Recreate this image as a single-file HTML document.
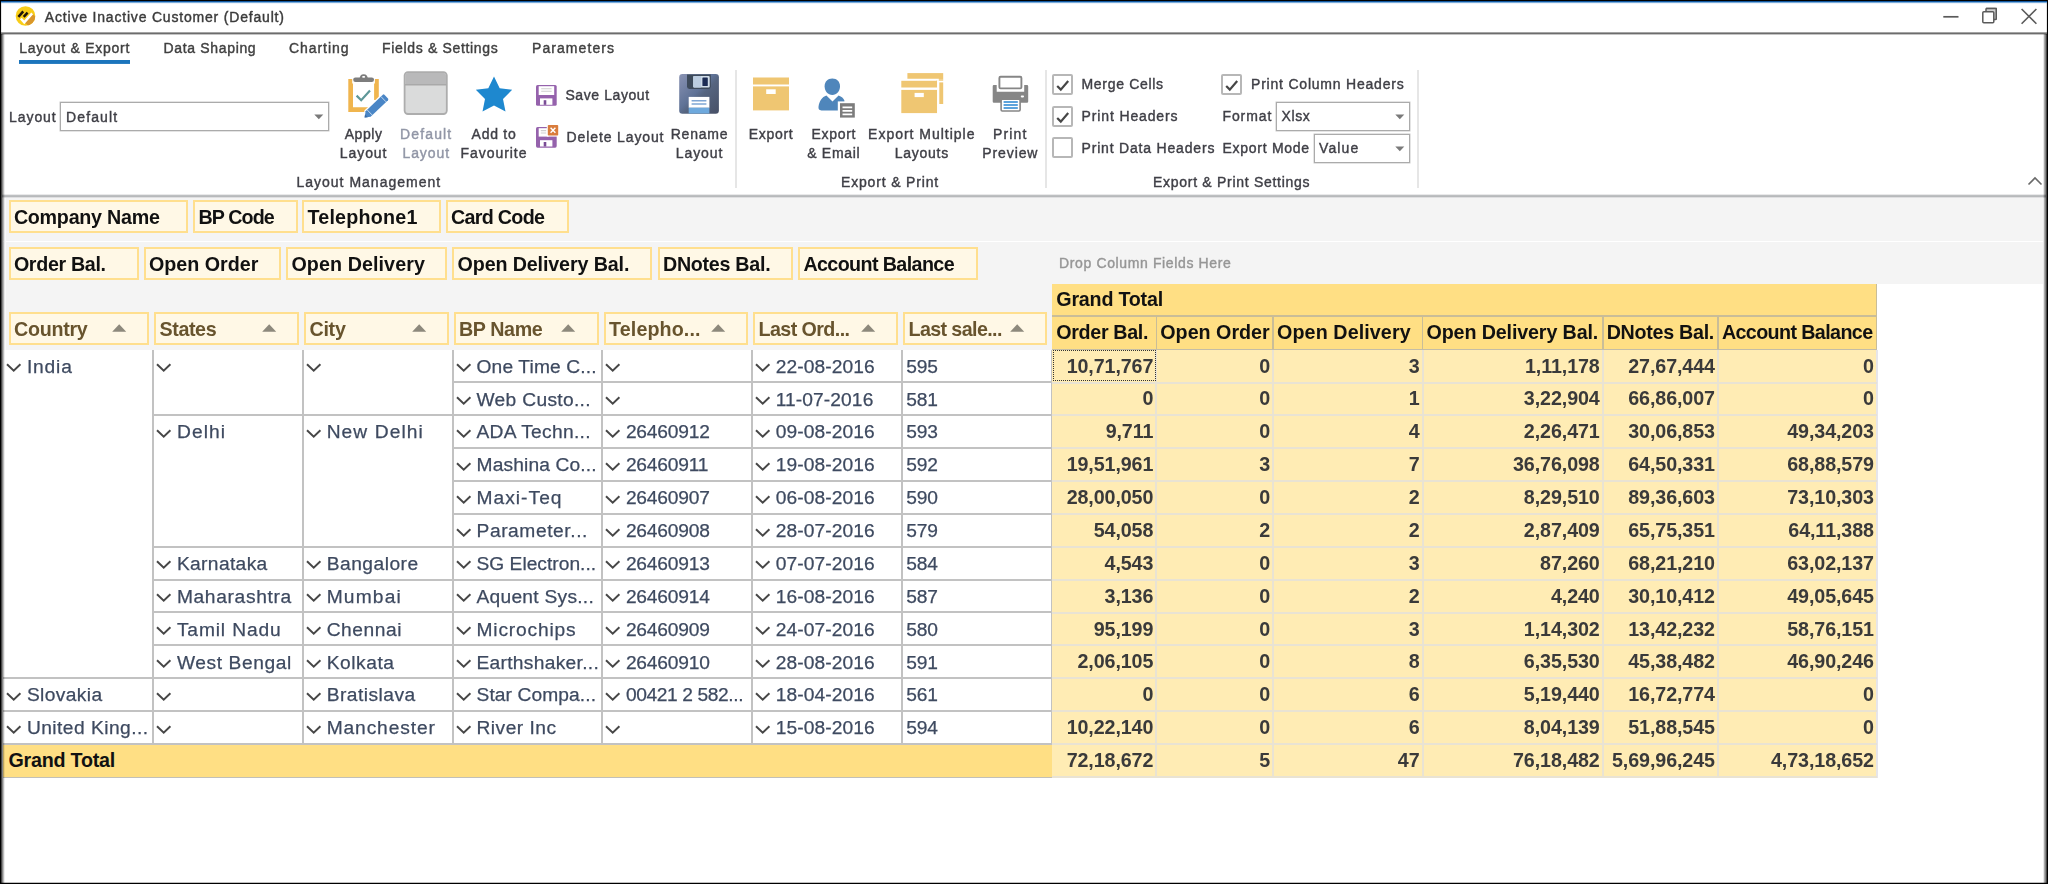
<!DOCTYPE html>
<html><head><meta charset="utf-8"><title>Active Inactive Customer (Default)</title>
<style>
html,body{margin:0;padding:0;background:#fff;}
body{width:2048px;height:884px;position:relative;overflow:hidden;font-family:"Liberation Sans",sans-serif;}
.a{position:absolute;box-sizing:border-box;}
.t{position:absolute;white-space:pre;}
.s{-webkit-text-stroke:0.4px currentColor;}
svg{position:absolute;overflow:visible;}
.fb{position:absolute;box-sizing:border-box;border:2px solid #ffdf8e;background:#fff8e6;height:33px;}
.hl{position:absolute;background:#b9b9b9;}
</style></head><body>

<div class="a" style="left:0px;top:0px;width:2048px;height:1px;background:#000;"></div>
<div class="a" style="left:0px;top:1px;width:2048px;height:1px;background:#10569f;"></div>
<div class="a" style="left:0px;top:2px;width:2048px;height:1px;background:#79acdb;"></div>
<div class="a" style="left:0px;top:3px;width:2048px;height:1px;background:#edf3fa;"></div>
<div class="a" id="content" style="left:0;top:0;width:2048px;height:884px;filter:blur(0.4px);">
<div class="a" style="left:1px;top:32px;width:2046px;height:1px;background:#a4a4a4;"></div>
<div class="a" style="left:1px;top:33px;width:2046px;height:1px;background:#6c6c6c;"></div>
<div class="a" style="left:1px;top:34px;width:2046px;height:1px;background:#c4c4c4;"></div>
<svg style="left:15px;top:6px" width="21" height="21" viewBox="0 0 21 21">
<defs><clipPath id="ic"><circle cx="10.5" cy="10" r="9.8"/></clipPath></defs>
<circle cx="10.5" cy="10" r="9.8" fill="#f8cd18"/>
<path d="M5.8 12.5 L9.25 16.3 L17.2 7.4 L27.2 17.4 L15.8 22.5 Z" fill="#d9962b" clip-path="url(#ic)"/>
<path d="M3.4 10.8 L8.2 5.4 M8.7 10.8 L12.6 6.6" stroke="#1f150c" stroke-width="2.5" fill="none"/>
<path d="M5.8 12.5 L9.25 16.3 L17.2 7.4" stroke="#fff" stroke-width="2.5" fill="none"/>
</svg>
<div class="t s" style="top:10.25px;font-size:14px;line-height:14px;color:#3b3b3b;letter-spacing:0.811px;left:44.80px;">Active Inactive Customer (Default)</div>
<svg style="left:1940px;top:5px" width="100" height="24" viewBox="0 0 100 24">
<path d="M3.3 11.8 H18.5" stroke="#5a5a5a" stroke-width="1.7" fill="none"/>
<path d="M46 3.5 H56.2 V14.5" stroke="#5a5a5a" stroke-width="1.5" fill="none"/>
<rect x="46" y="4" width="10" height="10" fill="#d0d0d0" stroke="none"/>
<rect x="42.8" y="6.8" width="11" height="11" rx="1" fill="#fff" stroke="#5a5a5a" stroke-width="1.5"/>
<path d="M46 6 V4.2 Q46 3.5 46.8 3.5 H55.4 Q56.2 3.5 56.2 4.3 V13.7 Q56.2 14.5 55.4 14.5 H54" stroke="#5a5a5a" stroke-width="1.5" fill="none"/>
<path d="M81.6 4 L96.4 18.8 M96.4 4 L81.6 18.8" stroke="#5a5a5a" stroke-width="1.6" fill="none"/>
</svg>
<div class="t s" style="top:40.80px;font-size:14px;line-height:14px;color:#414141;letter-spacing:0.746px;left:19.30px;">Layout &amp; Export</div>
<div class="t s" style="top:40.80px;font-size:14px;line-height:14px;color:#414141;letter-spacing:0.663px;left:163.50px;">Data Shaping</div>
<div class="t s" style="top:40.80px;font-size:14px;line-height:14px;color:#414141;letter-spacing:0.935px;left:289.00px;">Charting</div>
<div class="t s" style="top:40.80px;font-size:14px;line-height:14px;color:#414141;letter-spacing:0.668px;left:382.00px;">Fields &amp; Settings</div>
<div class="t s" style="top:40.80px;font-size:14px;line-height:14px;color:#414141;letter-spacing:1.074px;left:532.00px;">Parameters</div>
<div class="a" style="left:19px;top:60px;width:111px;height:4px;background:linear-gradient(to bottom,#1b75bc 0,#1b75bc 3.4px,#7fb0dc 4px);"></div>
<div class="t s" style="top:109.50px;font-size:14px;line-height:14px;color:#3f3f46;letter-spacing:0.911px;left:9.10px;">Layout</div>
<div class="a" style="left:60px;top:102px;width:269px;height:29px;border:1px solid #ababab;background:#fff;box-shadow:0 0 0 0.5px #c9c9c9;"></div>
<div class="t s" style="top:109.50px;font-size:14px;line-height:14px;color:#3f3f46;letter-spacing:1.12px;left:66.00px;">Default</div>
<svg style="left:314px;top:114px" width="10" height="6" viewBox="0 0 10 6"><path d="M0.3 0.6 H9.3 L4.8 5.2 Z" fill="#7a7a7a"/></svg>
<div class="t s" style="top:127.00px;font-size:14px;line-height:14px;color:#3f3f46;letter-spacing:0.576px;left:363.60px;transform:translateX(-50%);">Apply</div>
<div class="t s" style="top:146.30px;font-size:14px;line-height:14px;color:#3f3f46;letter-spacing:0.911px;left:363.60px;transform:translateX(-50%);">Layout</div>
<div class="t s" style="top:127.00px;font-size:14px;line-height:14px;color:#9196a6;letter-spacing:1.12px;left:426.20px;transform:translateX(-50%);">Default</div>
<div class="t s" style="top:146.30px;font-size:14px;line-height:14px;color:#9196a6;letter-spacing:0.911px;left:426.20px;transform:translateX(-50%);">Layout</div>
<div class="t s" style="top:127.00px;font-size:14px;line-height:14px;color:#3f3f46;letter-spacing:0.721px;left:494.00px;transform:translateX(-50%);">Add to</div>
<div class="t s" style="top:146.30px;font-size:14px;line-height:14px;color:#3f3f46;letter-spacing:0.949px;left:494.00px;transform:translateX(-50%);">Favourite</div>
<div class="t s" style="top:127.00px;font-size:14px;line-height:14px;color:#3f3f46;letter-spacing:0.764px;left:699.50px;transform:translateX(-50%);">Rename</div>
<div class="t s" style="top:146.30px;font-size:14px;line-height:14px;color:#3f3f46;letter-spacing:0.911px;left:699.50px;transform:translateX(-50%);">Layout</div>
<div class="t s" style="top:127.00px;font-size:14px;line-height:14px;color:#3f3f46;letter-spacing:0.706px;left:771.00px;transform:translateX(-50%);">Export</div>
<div class="t s" style="top:127.00px;font-size:14px;line-height:14px;color:#3f3f46;letter-spacing:0.706px;left:833.80px;transform:translateX(-50%);">Export</div>
<div class="t s" style="top:146.30px;font-size:14px;line-height:14px;color:#3f3f46;letter-spacing:0.695px;left:833.80px;transform:translateX(-50%);">&amp; Email</div>
<div class="t s" style="top:127.00px;font-size:14px;line-height:14px;color:#3f3f46;letter-spacing:0.987px;left:921.80px;transform:translateX(-50%);">Export Multiple</div>
<div class="t s" style="top:146.30px;font-size:14px;line-height:14px;color:#3f3f46;letter-spacing:0.752px;left:921.80px;transform:translateX(-50%);">Layouts</div>
<div class="t s" style="top:127.00px;font-size:14px;line-height:14px;color:#3f3f46;letter-spacing:1.142px;left:1010.30px;transform:translateX(-50%);">Print</div>
<div class="t s" style="top:146.30px;font-size:14px;line-height:14px;color:#3f3f46;letter-spacing:0.901px;left:1010.30px;transform:translateX(-50%);">Preview</div>
<div class="t s" style="top:88.40px;font-size:14px;line-height:14px;color:#3f3f46;letter-spacing:0.588px;left:565.40px;">Save Layout</div>
<div class="t s" style="top:130.00px;font-size:14px;line-height:14px;color:#3f3f46;letter-spacing:0.877px;left:566.60px;">Delete Layout</div>
<div class="t s" style="top:174.80px;font-size:14px;line-height:14px;color:#3f3f46;letter-spacing:1.003px;left:368.80px;transform:translateX(-50%);">Layout Management</div>
<div class="t s" style="top:174.70px;font-size:14px;line-height:14px;color:#3f3f46;letter-spacing:0.834px;left:890.00px;transform:translateX(-50%);">Export &amp; Print</div>
<div class="t s" style="top:174.70px;font-size:14px;line-height:14px;color:#3f3f46;letter-spacing:0.707px;left:1231.60px;transform:translateX(-50%);">Export &amp; Print Settings</div>
<div class="a" style="left:735px;top:70px;width:2px;height:118px;background:#e6e6e6;"></div>
<div class="a" style="left:1045px;top:70px;width:2px;height:118px;background:#e6e6e6;"></div>
<div class="a" style="left:1417px;top:70px;width:2px;height:118px;background:#e6e6e6;"></div>
<div class="a" style="left:1052.3999999999999px;top:74.10000000000001px;width:21px;height:21px;border:2px solid #b7b7b7;background:#fff;border-radius:2px;"><svg style="left:0;top:0" width="20" height="20" viewBox="0 0 20 20"><path d="M3.2 9.9 L6.8 13.6 L14.2 5" stroke="#464646" stroke-width="2.2" fill="none"/></svg></div>
<div class="a" style="left:1052.3999999999999px;top:105.5px;width:21px;height:21px;border:2px solid #b7b7b7;background:#fff;border-radius:2px;"><svg style="left:0;top:0" width="20" height="20" viewBox="0 0 20 20"><path d="M3.2 9.9 L6.8 13.6 L14.2 5" stroke="#464646" stroke-width="2.2" fill="none"/></svg></div>
<div class="a" style="left:1052.3999999999999px;top:136.89999999999998px;width:21px;height:21px;border:2px solid #b7b7b7;background:#fff;border-radius:2px;"></div>
<div class="a" style="left:1221.3999999999999px;top:74.10000000000001px;width:21px;height:21px;border:2px solid #b7b7b7;background:#fff;border-radius:2px;"><svg style="left:0;top:0" width="20" height="20" viewBox="0 0 20 20"><path d="M3.2 9.9 L6.8 13.6 L14.2 5" stroke="#464646" stroke-width="2.2" fill="none"/></svg></div>
<div class="t s" style="top:77.40px;font-size:14px;line-height:14px;color:#3f3f46;letter-spacing:0.692px;left:1081.50px;">Merge Cells</div>
<div class="t s" style="top:109.30px;font-size:14px;line-height:14px;color:#3f3f46;letter-spacing:0.87px;left:1081.50px;">Print Headers</div>
<div class="t s" style="top:140.70px;font-size:14px;line-height:14px;color:#3f3f46;letter-spacing:0.813px;left:1081.50px;">Print Data Headers</div>
<div class="t s" style="top:77.40px;font-size:14px;line-height:14px;color:#3f3f46;letter-spacing:0.789px;left:1251.00px;">Print Column Headers</div>
<div class="t s" style="top:109.30px;font-size:14px;line-height:14px;color:#3f3f46;letter-spacing:0.943px;left:1222.40px;">Format</div>
<div class="t s" style="top:140.70px;font-size:14px;line-height:14px;color:#3f3f46;letter-spacing:0.739px;left:1222.40px;">Export Mode</div>
<div class="a" style="left:1276px;top:102px;width:133.8px;height:29px;border:1px solid #ababab;background:#fff;box-shadow:0 0 0 0.5px #c9c9c9;"></div>
<div class="a" style="left:1313.5px;top:134px;width:96.3px;height:29px;border:1px solid #ababab;background:#fff;box-shadow:0 0 0 0.5px #c9c9c9;"></div>
<div class="t s" style="top:109.30px;font-size:14px;line-height:14px;color:#3f3f46;letter-spacing:0.613px;left:1281.50px;">Xlsx</div>
<div class="t s" style="top:140.70px;font-size:14px;line-height:14px;color:#3f3f46;letter-spacing:1.126px;left:1319.00px;">Value</div>
<svg style="left:1395px;top:114px" width="10" height="6" viewBox="0 0 10 6"><path d="M0.3 0.6 H9.3 L4.8 5.2 Z" fill="#7a7a7a"/></svg>
<svg style="left:1395px;top:146px" width="10" height="6" viewBox="0 0 10 6"><path d="M0.3 0.6 H9.3 L4.8 5.2 Z" fill="#7a7a7a"/></svg>
<svg style="left:2026.5px;top:176px" width="16" height="10" viewBox="0 0 16 10"><path d="M1.5 8.5 L8 2 L14.5 8.5" stroke="#6a6a6a" stroke-width="1.6" fill="none"/></svg>
<svg style="left:0;top:0" width="2048" height="200" viewBox="0 0 2048 200">
<!-- Apply Layout: clipboard + check + pencil -->
<g>
<path d="M348.3 79 H352.2 V83.4 H353 V107.2 H368 V112 H348.3 Z" fill="#f0b54e"/>
<path d="M378.8 79 H374.9 V83.4 H374.1 V100 H378.8 Z" fill="#f0b54e"/>
<rect x="353.2" y="77.4" width="20.8" height="4.6" rx="2.2" fill="#7d7d7d"/>
<path d="M359.6 79 Q359.6 74.3 363.6 74.3 Q367.8 74.3 367.8 79 Z" fill="#7d7d7d"/>
<rect x="362.2" y="76" width="2.9" height="1.7" rx="0.8" fill="#fff"/>
<path d="M356.6 95.6 L361.2 100.2 L370 90.6" stroke="#5e9798" stroke-width="2.2" fill="none"/>
<path d="M365.6 111.2 L382.8 94.7 Q383.6 94 384.4 94.8 L388 98.6 Q388.7 99.4 388 100.2 L370.6 116.8 L364.6 117.6 Z" fill="#4a86c6" stroke="#fff" stroke-width="2.6" paint-order="stroke" stroke-linejoin="round"/>
<path d="M367.2 109.9 L372 114.9 M381 96.6 L386 101.8" stroke="#cfe0f2" stroke-width="0.9" fill="none"/>
<path d="M365 114.4 L364.6 117.6 L367.8 117.2 Z" fill="#3a6aa6"/>
</g>
<!-- Default Layout (disabled window) -->
<g>
<rect x="404.6" y="72.2" width="42.2" height="41.8" rx="3.4" fill="#dadbdb" stroke="#adadad" stroke-width="1.8"/>
<path d="M405.4 84.6 V75.4 Q405.4 73 407.8 73 H443.6 Q446 73 446 75.4 V84.6 Z" fill="#b9b9ba"/>
<path d="M405 84.8 H446.4" stroke="#a9a9a9" stroke-width="1.4"/>
</g>
<!-- Star -->
<path d="M494 76.4 L499.7 88.2 L512.2 89.8 L503 98.9 L505.5 111.4 L494 105.4 L482.5 111.4 L485 98.9 L475.8 89.8 L488.3 88.2 Z" fill="#1e88cf"/>
<!-- Save -->
<g>
<rect x="536" y="84.9" width="20.7" height="20.9" rx="1.6" fill="#9562ac"/>
<rect x="538.7" y="86.2" width="15.5" height="8.8" fill="#fff"/>
<path d="M541.2 88.8 H551.6 M541.2 91.2 H551.6" stroke="#cfcfcf" stroke-width="1.1"/>
<rect x="540" y="98.4" width="12.4" height="6.4" fill="#fff"/>
<rect x="543.7" y="100.2" width="2.6" height="4.6" fill="#7a4d96"/>
</g>
<!-- Delete -->
<g>
<rect x="536" y="126.9" width="20.7" height="20.8" rx="1.6" fill="#9562ac"/>
<rect x="538.7" y="128.2" width="10" height="8.4" fill="#fff"/>
<path d="M540.8 130.6 H546.2 M540.8 133 H546.2" stroke="#cfcfcf" stroke-width="1.1"/>
<rect x="546.8" y="124" width="12.4" height="12.6" fill="#fff"/>
<rect x="547.8" y="125" width="10.4" height="10.6" rx="0.8" fill="#d97c3c"/>
<path d="M550.6 127.8 L555.4 132.8 M555.4 127.8 L550.6 132.8" stroke="#fff" stroke-width="1.4"/>
<rect x="540" y="140.2" width="12.4" height="6.3" fill="#fff"/>
<rect x="543.7" y="142" width="2.6" height="4.5" fill="#7a4d96"/>
</g>
<!-- Rename (floppy) -->
<g>
<defs><linearGradient id="fg" x1="0" y1="0" x2="1" y2="1"><stop offset="0" stop-color="#8a93b3"/><stop offset="0.45" stop-color="#5f7296"/><stop offset="0.55" stop-color="#566580"/><stop offset="1" stop-color="#475066"/></linearGradient></defs>
<rect x="679.2" y="74" width="39.7" height="39.7" rx="3.2" fill="url(#fg)"/>
<path d="M687 74.6 H710.8 V86.6 Q710.8 89 708.4 89 H689.4 Q687 89 687 86.6 Z" fill="#3d4a5a"/>
<rect x="693.2" y="75.9" width="16.5" height="11.6" rx="1" fill="#d3dfea"/>
<rect x="693.2" y="75.9" width="8" height="11.6" rx="1" fill="#bccde0"/>
<rect x="702.4" y="77.5" width="5.4" height="8.6" rx="0.6" fill="#1c2c54"/>
<rect x="688.7" y="96.9" width="20.7" height="10.9" fill="#fff"/>
<path d="M691.6 100.7 H706.4 M691.6 103.9 H706.4" stroke="#7fa6d4" stroke-width="1.5"/>
<rect x="688.7" y="107.7" width="20.7" height="5.8" fill="#6ea9dd"/>
</g>
<!-- Export box -->
<g fill="#efc672">
<rect x="753" y="77.5" width="36" height="7"/>
<rect x="753" y="86.4" width="36" height="24"/>
<rect x="766.2" y="89.3" width="9.5" height="4.7" fill="#fff"/>
</g>
<!-- Export & Email: person + doc -->
<g>
<path d="M832.3 78.6 C837 78.6 840 82 840 86.2 C840 91 836.6 95 832.3 95 C828 95 824.6 91 824.6 86.2 C824.6 82 827.6 78.6 832.3 78.6 Z" fill="#4f86bb"/>
<path d="M826.4 95.6 L832.5 101.4 L838.6 95.6 C841.6 96.6 843.6 98.4 844.4 100.6 L844.4 110.4 H821.4 C819.2 110.4 818.2 109 818.5 106.8 C819.4 101 822 97 826.4 95.6 Z" fill="#4f86bb"/>
<rect x="837.8" y="101.4" width="19" height="18" fill="#fff"/>
<rect x="840" y="103.2" width="14.8" height="14.4" fill="#7c7c7c"/>
<path d="M842.5 107.3 H852.2 M842.5 110.8 H852.2 M842.5 114.3 H852.2" stroke="#fff" stroke-width="1.8"/>
</g>
<!-- Export Multiple -->
<g fill="#efc672">
<rect x="907.4" y="73.1" width="35.8" height="6.6"/>
<rect x="936" y="79.7" width="7.2" height="1"/>
<rect x="939.3" y="82.4" width="3.9" height="21.6"/>
<rect x="901.3" y="80.6" width="35.8" height="6.9"/>
<rect x="901.3" y="89.9" width="35.8" height="23.2"/>
<rect x="914.6" y="92.9" width="9.2" height="4.2" fill="#fff"/>
</g>
<path d="M900.6 79.6 H938 V113.6" stroke="#fff" stroke-width="1.6" fill="none"/>
<!-- Print -->
<g>
<path d="M992.7 86.3 Q992.7 85.1 993.9 85.1 H996.7 V91.8 H1024.2 V85.1 H1027 Q1028.2 85.1 1028.2 86.3 V101.6 Q1028.2 102.8 1027 102.8 H993.9 Q992.7 102.8 992.7 101.6 Z" fill="#868686"/>
<rect x="999.4" y="76.8" width="22" height="11.6" rx="1.2" fill="#fff" stroke="#868686" stroke-width="1.9"/>
<rect x="1020.8" y="95.5" width="3.2" height="1.9" rx="0.8" fill="#fff"/>
<rect x="1001.1" y="99.2" width="19" height="11.8" rx="1.2" fill="#fff" stroke="#868686" stroke-width="1.6"/>
<path d="M1003.6 102 H1017.8 M1003.6 105 H1017.8 M1003.6 108 H1017.8" stroke="#5ca3dc" stroke-width="1.9"/>
</g>
</svg>

<div class="a" style="left:2px;top:194px;width:2044px;height:1px;background:#e9e9ea;"></div>
<div class="a" style="left:2px;top:195px;width:2044px;height:1px;background:#bdbfc1;"></div>
<div class="a" style="left:2px;top:196px;width:2044px;height:1px;background:#b7b9bb;"></div>
<div class="a" style="left:2px;top:197px;width:2044px;height:1px;background:#dfdfe1;"></div>
<div class="a" style="left:3px;top:198px;width:2040px;height:43px;background:#f4f4f4;"></div>
<div class="a" style="left:3px;top:242px;width:2040px;height:42px;background:#f4f4f4;"></div>
<div class="a" style="left:3px;top:284px;width:1049.5px;height:65.7px;background:#f4f4f4;"></div>
<div class="a" style="left:3.6px;top:198px;width:2.8px;height:151.7px;background:#fafafa;"></div>
<div class="fb" style="left:8.5px;top:200.3px;width:179.5px;"><div class="t" style="left:3.4px;top:6.20px;font-size:19.7px;line-height:19.7px;font-weight:700;letter-spacing:-0.257px;color:#111;">Company Name</div></div>
<div class="fb" style="left:193px;top:200.3px;width:104.5px;"><div class="t" style="left:3.4px;top:6.20px;font-size:19.7px;line-height:19.7px;font-weight:700;letter-spacing:-0.877px;color:#111;">BP Code</div></div>
<div class="fb" style="left:302px;top:200.3px;width:139px;"><div class="t" style="left:3.4px;top:6.20px;font-size:19.7px;line-height:19.7px;font-weight:700;letter-spacing:0.239px;color:#111;">Telephone1</div></div>
<div class="fb" style="left:445.5px;top:200.3px;width:123.0px;"><div class="t" style="left:3.4px;top:6.20px;font-size:19.7px;line-height:19.7px;font-weight:700;letter-spacing:-0.69px;color:#111;">Card Code</div></div>
<div class="fb" style="left:8.5px;top:246.6px;width:130.0px;"><div class="t" style="left:3.4px;top:6.20px;font-size:19.7px;line-height:19.7px;font-weight:700;letter-spacing:-0.335px;color:#111;">Order Bal.</div></div>
<div class="fb" style="left:143.5px;top:246.6px;width:137.5px;"><div class="t" style="left:3.4px;top:6.20px;font-size:19.7px;line-height:19.7px;font-weight:700;letter-spacing:0.003px;color:#111;">Open Order</div></div>
<div class="fb" style="left:286px;top:246.6px;width:161px;"><div class="t" style="left:3.4px;top:6.20px;font-size:19.7px;line-height:19.7px;font-weight:700;letter-spacing:0.093px;color:#111;">Open Delivery</div></div>
<div class="fb" style="left:452.2px;top:246.6px;width:200.00000000000006px;"><div class="t" style="left:3.4px;top:6.20px;font-size:19.7px;line-height:19.7px;font-weight:700;letter-spacing:-0.13px;color:#111;">Open Delivery Bal.</div></div>
<div class="fb" style="left:657.6px;top:246.6px;width:135.39999999999998px;"><div class="t" style="left:3.4px;top:6.20px;font-size:19.7px;line-height:19.7px;font-weight:700;letter-spacing:-0.288px;color:#111;">DNotes Bal.</div></div>
<div class="fb" style="left:798px;top:246.6px;width:179.5px;"><div class="t" style="left:3.4px;top:6.20px;font-size:19.7px;line-height:19.7px;font-weight:700;letter-spacing:-0.609px;color:#111;">Account Balance</div></div>
<div class="t s" style="top:256.40px;font-size:14px;line-height:14px;color:#969696;letter-spacing:0.624px;left:1059.10px;">Drop Column Fields Here</div>
<div class="fb" style="left:8.7px;top:312.1px;width:140.60000000000002px;"><div class="t" style="left:3.4px;top:6.20px;font-size:19.7px;line-height:19.7px;font-weight:700;letter-spacing:-0.302px;color:#68542e;">Country</div></div>
<svg style="left:112.4px;top:324.2px" width="15" height="8" viewBox="0 0 15 8"><path d="M0.2 7.8 L7.2 0.3 L14.2 7.8 Z" fill="#8d897c"/></svg>
<div class="fb" style="left:154.1px;top:312.1px;width:144.79999999999998px;"><div class="t" style="left:3.4px;top:6.20px;font-size:19.7px;line-height:19.7px;font-weight:700;letter-spacing:-0.389px;color:#68542e;">States</div></div>
<svg style="left:262px;top:324.2px" width="15" height="8" viewBox="0 0 15 8"><path d="M0.2 7.8 L7.2 0.3 L14.2 7.8 Z" fill="#8d897c"/></svg>
<div class="fb" style="left:304px;top:312.1px;width:144.7px;"><div class="t" style="left:3.4px;top:6.20px;font-size:19.7px;line-height:19.7px;font-weight:700;letter-spacing:-0.229px;color:#68542e;">City</div></div>
<svg style="left:411.6px;top:324.2px" width="15" height="8" viewBox="0 0 15 8"><path d="M0.2 7.8 L7.2 0.3 L14.2 7.8 Z" fill="#8d897c"/></svg>
<div class="fb" style="left:453.6px;top:312.1px;width:145.0px;"><div class="t" style="left:3.4px;top:6.20px;font-size:19.7px;line-height:19.7px;font-weight:700;letter-spacing:-0.392px;color:#68542e;">BP Name</div></div>
<svg style="left:561.4px;top:324.2px" width="15" height="8" viewBox="0 0 15 8"><path d="M0.2 7.8 L7.2 0.3 L14.2 7.8 Z" fill="#8d897c"/></svg>
<div class="fb" style="left:603.7px;top:312.1px;width:144.69999999999993px;"><div class="t" style="left:3.4px;top:6.20px;font-size:19.7px;line-height:19.7px;font-weight:700;letter-spacing:0.112px;color:#68542e;">Telepho...</div></div>
<svg style="left:711px;top:324.2px" width="15" height="8" viewBox="0 0 15 8"><path d="M0.2 7.8 L7.2 0.3 L14.2 7.8 Z" fill="#8d897c"/></svg>
<div class="fb" style="left:753.2px;top:312.1px;width:144.39999999999998px;"><div class="t" style="left:3.4px;top:6.20px;font-size:19.7px;line-height:19.7px;font-weight:700;letter-spacing:-0.593px;color:#68542e;">Last Ord...</div></div>
<svg style="left:860.6px;top:324.2px" width="15" height="8" viewBox="0 0 15 8"><path d="M0.2 7.8 L7.2 0.3 L14.2 7.8 Z" fill="#8d897c"/></svg>
<div class="fb" style="left:903.1px;top:312.1px;width:144.39999999999998px;"><div class="t" style="left:3.4px;top:6.20px;font-size:19.7px;line-height:19.7px;font-weight:700;letter-spacing:-0.612px;color:#68542e;">Last sale...</div></div>
<svg style="left:1010.4px;top:324.2px" width="15" height="8" viewBox="0 0 15 8"><path d="M0.2 7.8 L7.2 0.3 L14.2 7.8 Z" fill="#8d897c"/></svg>
<div class="a" style="left:1052.4px;top:284.2px;width:824.5999999999999px;height:65.6px;background:#ffdf84;"></div>
<div class="a" style="left:1052.4px;top:348.6px;width:824.5999999999999px;height:1.2px;background:#c4bda6;"></div>
<div class="a" style="left:1052.4px;top:315.2px;width:824.5999999999999px;height:1.6px;background:#c9bd98;"></div>
<div class="a" style="left:1155.6000000000001px;top:316px;width:1.6px;height:33px;background:#c9bd98;"></div>
<div class="a" style="left:1272.4px;top:316px;width:1.6px;height:33px;background:#c9bd98;"></div>
<div class="a" style="left:1421.8px;top:316px;width:1.6px;height:33px;background:#c9bd98;"></div>
<div class="a" style="left:1602.0px;top:316px;width:1.6px;height:33px;background:#c9bd98;"></div>
<div class="a" style="left:1717.2px;top:316px;width:1.6px;height:33px;background:#c9bd98;"></div>
<div class="a" style="left:1876px;top:284px;width:1.2px;height:65px;background:#c9bd98;"></div>
<div class="t" style="top:289.65px;font-size:19.7px;line-height:19.7px;color:#111;font-weight:700;letter-spacing:-0.217px;left:1056.30px;">Grand Total</div>
<div class="t" style="top:322.55px;font-size:19.7px;line-height:19.7px;color:#111;font-weight:700;letter-spacing:-0.335px;left:1056.30px;">Order Bal.</div>
<div class="t" style="top:322.55px;font-size:19.7px;line-height:19.7px;color:#111;font-weight:700;letter-spacing:0.003px;left:1160.30px;">Open Order</div>
<div class="t" style="top:322.55px;font-size:19.7px;line-height:19.7px;color:#111;font-weight:700;letter-spacing:0.093px;left:1277.10px;">Open Delivery</div>
<div class="t" style="top:322.55px;font-size:19.7px;line-height:19.7px;color:#111;font-weight:700;letter-spacing:-0.13px;left:1426.50px;">Open Delivery Bal.</div>
<div class="t" style="top:322.55px;font-size:19.7px;line-height:19.7px;color:#111;font-weight:700;letter-spacing:-0.288px;left:1606.70px;">DNotes Bal.</div>
<div class="t" style="top:322.55px;font-size:19.7px;line-height:19.7px;color:#111;font-weight:700;letter-spacing:-0.609px;left:1721.90px;">Account Balance</div>
<svg style="left:6.3px;top:363.2px" width="16" height="10" viewBox="0 0 16 10"><path d="M1 1.2 L7.7 7.6 L14.4 1.2" stroke="#474747" stroke-width="2" fill="none"/></svg>
<div class="t" style="top:356.73px;font-size:19.2px;line-height:19.2px;color:#3e4a60;letter-spacing:0.853px;left:26.90px;-webkit-text-stroke:0.25px currentColor;">India</div>
<svg style="left:156.3px;top:363.2px" width="16" height="10" viewBox="0 0 16 10"><path d="M1 1.2 L7.7 7.6 L14.4 1.2" stroke="#474747" stroke-width="2" fill="none"/></svg>
<svg style="left:306.1px;top:363.2px" width="16" height="10" viewBox="0 0 16 10"><path d="M1 1.2 L7.7 7.6 L14.4 1.2" stroke="#474747" stroke-width="2" fill="none"/></svg>
<svg style="left:455.9px;top:363.2px" width="16" height="10" viewBox="0 0 16 10"><path d="M1 1.2 L7.7 7.6 L14.4 1.2" stroke="#474747" stroke-width="2" fill="none"/></svg>
<div class="t" style="top:356.73px;font-size:19.2px;line-height:19.2px;color:#3e4a60;letter-spacing:0.143px;left:476.50px;-webkit-text-stroke:0.25px currentColor;">One Time C...</div>
<svg style="left:605.3px;top:363.2px" width="16" height="10" viewBox="0 0 16 10"><path d="M1 1.2 L7.7 7.6 L14.4 1.2" stroke="#474747" stroke-width="2" fill="none"/></svg>
<svg style="left:755.1px;top:363.2px" width="16" height="10" viewBox="0 0 16 10"><path d="M1 1.2 L7.7 7.6 L14.4 1.2" stroke="#474747" stroke-width="2" fill="none"/></svg>
<div class="t" style="top:356.73px;font-size:19.2px;line-height:19.2px;color:#3e4a60;letter-spacing:0.1px;left:775.70px;-webkit-text-stroke:0.25px currentColor;">22-08-2016</div>
<div class="t" style="top:356.73px;font-size:19.2px;line-height:19.2px;color:#3e4a60;letter-spacing:-0.2px;left:906.20px;-webkit-text-stroke:0.25px currentColor;">595</div>
<svg style="left:455.9px;top:396.1px" width="16" height="10" viewBox="0 0 16 10"><path d="M1 1.2 L7.7 7.6 L14.4 1.2" stroke="#474747" stroke-width="2" fill="none"/></svg>
<div class="t" style="top:389.60px;font-size:19.2px;line-height:19.2px;color:#3e4a60;letter-spacing:0.323px;left:476.50px;-webkit-text-stroke:0.25px currentColor;">Web Custo...</div>
<svg style="left:605.3px;top:396.1px" width="16" height="10" viewBox="0 0 16 10"><path d="M1 1.2 L7.7 7.6 L14.4 1.2" stroke="#474747" stroke-width="2" fill="none"/></svg>
<svg style="left:755.1px;top:396.1px" width="16" height="10" viewBox="0 0 16 10"><path d="M1 1.2 L7.7 7.6 L14.4 1.2" stroke="#474747" stroke-width="2" fill="none"/></svg>
<div class="t" style="top:389.60px;font-size:19.2px;line-height:19.2px;color:#3e4a60;letter-spacing:0.1px;left:775.70px;-webkit-text-stroke:0.25px currentColor;">11-07-2016</div>
<div class="t" style="top:389.60px;font-size:19.2px;line-height:19.2px;color:#3e4a60;letter-spacing:-0.2px;left:906.20px;-webkit-text-stroke:0.25px currentColor;">581</div>
<svg style="left:156.3px;top:429.0px" width="16" height="10" viewBox="0 0 16 10"><path d="M1 1.2 L7.7 7.6 L14.4 1.2" stroke="#474747" stroke-width="2" fill="none"/></svg>
<div class="t" style="top:422.47px;font-size:19.2px;line-height:19.2px;color:#3e4a60;letter-spacing:1.129px;left:176.90px;-webkit-text-stroke:0.25px currentColor;">Delhi</div>
<svg style="left:306.1px;top:429.0px" width="16" height="10" viewBox="0 0 16 10"><path d="M1 1.2 L7.7 7.6 L14.4 1.2" stroke="#474747" stroke-width="2" fill="none"/></svg>
<div class="t" style="top:422.47px;font-size:19.2px;line-height:19.2px;color:#3e4a60;letter-spacing:1.078px;left:326.70px;-webkit-text-stroke:0.25px currentColor;">New Delhi</div>
<svg style="left:455.9px;top:429.0px" width="16" height="10" viewBox="0 0 16 10"><path d="M1 1.2 L7.7 7.6 L14.4 1.2" stroke="#474747" stroke-width="2" fill="none"/></svg>
<div class="t" style="top:422.47px;font-size:19.2px;line-height:19.2px;color:#3e4a60;letter-spacing:0.321px;left:476.50px;-webkit-text-stroke:0.25px currentColor;">ADA Techn...</div>
<svg style="left:605.3px;top:429.0px" width="16" height="10" viewBox="0 0 16 10"><path d="M1 1.2 L7.7 7.6 L14.4 1.2" stroke="#474747" stroke-width="2" fill="none"/></svg>
<div class="t" style="top:422.47px;font-size:19.2px;line-height:19.2px;color:#3e4a60;letter-spacing:-0.2px;left:625.90px;-webkit-text-stroke:0.25px currentColor;">26460912</div>
<svg style="left:755.1px;top:429.0px" width="16" height="10" viewBox="0 0 16 10"><path d="M1 1.2 L7.7 7.6 L14.4 1.2" stroke="#474747" stroke-width="2" fill="none"/></svg>
<div class="t" style="top:422.47px;font-size:19.2px;line-height:19.2px;color:#3e4a60;letter-spacing:0.1px;left:775.70px;-webkit-text-stroke:0.25px currentColor;">09-08-2016</div>
<div class="t" style="top:422.47px;font-size:19.2px;line-height:19.2px;color:#3e4a60;letter-spacing:-0.2px;left:906.20px;-webkit-text-stroke:0.25px currentColor;">593</div>
<svg style="left:455.9px;top:461.8px" width="16" height="10" viewBox="0 0 16 10"><path d="M1 1.2 L7.7 7.6 L14.4 1.2" stroke="#474747" stroke-width="2" fill="none"/></svg>
<div class="t" style="top:455.34px;font-size:19.2px;line-height:19.2px;color:#3e4a60;letter-spacing:0.142px;left:476.50px;-webkit-text-stroke:0.25px currentColor;">Mashina Co...</div>
<svg style="left:605.3px;top:461.8px" width="16" height="10" viewBox="0 0 16 10"><path d="M1 1.2 L7.7 7.6 L14.4 1.2" stroke="#474747" stroke-width="2" fill="none"/></svg>
<div class="t" style="top:455.34px;font-size:19.2px;line-height:19.2px;color:#3e4a60;letter-spacing:-0.2px;left:625.90px;-webkit-text-stroke:0.25px currentColor;">26460911</div>
<svg style="left:755.1px;top:461.8px" width="16" height="10" viewBox="0 0 16 10"><path d="M1 1.2 L7.7 7.6 L14.4 1.2" stroke="#474747" stroke-width="2" fill="none"/></svg>
<div class="t" style="top:455.34px;font-size:19.2px;line-height:19.2px;color:#3e4a60;letter-spacing:0.1px;left:775.70px;-webkit-text-stroke:0.25px currentColor;">19-08-2016</div>
<div class="t" style="top:455.34px;font-size:19.2px;line-height:19.2px;color:#3e4a60;letter-spacing:-0.2px;left:906.20px;-webkit-text-stroke:0.25px currentColor;">592</div>
<svg style="left:455.9px;top:494.7px" width="16" height="10" viewBox="0 0 16 10"><path d="M1 1.2 L7.7 7.6 L14.4 1.2" stroke="#474747" stroke-width="2" fill="none"/></svg>
<div class="t" style="top:488.21px;font-size:19.2px;line-height:19.2px;color:#3e4a60;letter-spacing:1.026px;left:476.50px;-webkit-text-stroke:0.25px currentColor;">Maxi-Teq</div>
<svg style="left:605.3px;top:494.7px" width="16" height="10" viewBox="0 0 16 10"><path d="M1 1.2 L7.7 7.6 L14.4 1.2" stroke="#474747" stroke-width="2" fill="none"/></svg>
<div class="t" style="top:488.21px;font-size:19.2px;line-height:19.2px;color:#3e4a60;letter-spacing:-0.2px;left:625.90px;-webkit-text-stroke:0.25px currentColor;">26460907</div>
<svg style="left:755.1px;top:494.7px" width="16" height="10" viewBox="0 0 16 10"><path d="M1 1.2 L7.7 7.6 L14.4 1.2" stroke="#474747" stroke-width="2" fill="none"/></svg>
<div class="t" style="top:488.21px;font-size:19.2px;line-height:19.2px;color:#3e4a60;letter-spacing:0.1px;left:775.70px;-webkit-text-stroke:0.25px currentColor;">06-08-2016</div>
<div class="t" style="top:488.21px;font-size:19.2px;line-height:19.2px;color:#3e4a60;letter-spacing:-0.2px;left:906.20px;-webkit-text-stroke:0.25px currentColor;">590</div>
<svg style="left:455.9px;top:527.6px" width="16" height="10" viewBox="0 0 16 10"><path d="M1 1.2 L7.7 7.6 L14.4 1.2" stroke="#474747" stroke-width="2" fill="none"/></svg>
<div class="t" style="top:521.08px;font-size:19.2px;line-height:19.2px;color:#3e4a60;letter-spacing:0.585px;left:476.50px;-webkit-text-stroke:0.25px currentColor;">Parameter...</div>
<svg style="left:605.3px;top:527.6px" width="16" height="10" viewBox="0 0 16 10"><path d="M1 1.2 L7.7 7.6 L14.4 1.2" stroke="#474747" stroke-width="2" fill="none"/></svg>
<div class="t" style="top:521.08px;font-size:19.2px;line-height:19.2px;color:#3e4a60;letter-spacing:-0.2px;left:625.90px;-webkit-text-stroke:0.25px currentColor;">26460908</div>
<svg style="left:755.1px;top:527.6px" width="16" height="10" viewBox="0 0 16 10"><path d="M1 1.2 L7.7 7.6 L14.4 1.2" stroke="#474747" stroke-width="2" fill="none"/></svg>
<div class="t" style="top:521.08px;font-size:19.2px;line-height:19.2px;color:#3e4a60;letter-spacing:0.1px;left:775.70px;-webkit-text-stroke:0.25px currentColor;">28-07-2016</div>
<div class="t" style="top:521.08px;font-size:19.2px;line-height:19.2px;color:#3e4a60;letter-spacing:-0.2px;left:906.20px;-webkit-text-stroke:0.25px currentColor;">579</div>
<svg style="left:156.3px;top:560.4px" width="16" height="10" viewBox="0 0 16 10"><path d="M1 1.2 L7.7 7.6 L14.4 1.2" stroke="#474747" stroke-width="2" fill="none"/></svg>
<div class="t" style="top:553.95px;font-size:19.2px;line-height:19.2px;color:#3e4a60;letter-spacing:0.364px;left:176.90px;-webkit-text-stroke:0.25px currentColor;">Karnataka</div>
<svg style="left:306.1px;top:560.4px" width="16" height="10" viewBox="0 0 16 10"><path d="M1 1.2 L7.7 7.6 L14.4 1.2" stroke="#474747" stroke-width="2" fill="none"/></svg>
<div class="t" style="top:553.95px;font-size:19.2px;line-height:19.2px;color:#3e4a60;letter-spacing:0.496px;left:326.70px;-webkit-text-stroke:0.25px currentColor;">Bangalore</div>
<svg style="left:455.9px;top:560.4px" width="16" height="10" viewBox="0 0 16 10"><path d="M1 1.2 L7.7 7.6 L14.4 1.2" stroke="#474747" stroke-width="2" fill="none"/></svg>
<div class="t" style="top:553.95px;font-size:19.2px;line-height:19.2px;color:#3e4a60;letter-spacing:0.013px;left:476.50px;-webkit-text-stroke:0.25px currentColor;">SG Electron...</div>
<svg style="left:605.3px;top:560.4px" width="16" height="10" viewBox="0 0 16 10"><path d="M1 1.2 L7.7 7.6 L14.4 1.2" stroke="#474747" stroke-width="2" fill="none"/></svg>
<div class="t" style="top:553.95px;font-size:19.2px;line-height:19.2px;color:#3e4a60;letter-spacing:-0.2px;left:625.90px;-webkit-text-stroke:0.25px currentColor;">26460913</div>
<svg style="left:755.1px;top:560.4px" width="16" height="10" viewBox="0 0 16 10"><path d="M1 1.2 L7.7 7.6 L14.4 1.2" stroke="#474747" stroke-width="2" fill="none"/></svg>
<div class="t" style="top:553.95px;font-size:19.2px;line-height:19.2px;color:#3e4a60;letter-spacing:0.1px;left:775.70px;-webkit-text-stroke:0.25px currentColor;">07-07-2016</div>
<div class="t" style="top:553.95px;font-size:19.2px;line-height:19.2px;color:#3e4a60;letter-spacing:-0.2px;left:906.20px;-webkit-text-stroke:0.25px currentColor;">584</div>
<svg style="left:156.3px;top:593.3px" width="16" height="10" viewBox="0 0 16 10"><path d="M1 1.2 L7.7 7.6 L14.4 1.2" stroke="#474747" stroke-width="2" fill="none"/></svg>
<div class="t" style="top:586.82px;font-size:19.2px;line-height:19.2px;color:#3e4a60;letter-spacing:0.656px;left:176.90px;-webkit-text-stroke:0.25px currentColor;">Maharashtra</div>
<svg style="left:306.1px;top:593.3px" width="16" height="10" viewBox="0 0 16 10"><path d="M1 1.2 L7.7 7.6 L14.4 1.2" stroke="#474747" stroke-width="2" fill="none"/></svg>
<div class="t" style="top:586.82px;font-size:19.2px;line-height:19.2px;color:#3e4a60;letter-spacing:1.168px;left:326.70px;-webkit-text-stroke:0.25px currentColor;">Mumbai</div>
<svg style="left:455.9px;top:593.3px" width="16" height="10" viewBox="0 0 16 10"><path d="M1 1.2 L7.7 7.6 L14.4 1.2" stroke="#474747" stroke-width="2" fill="none"/></svg>
<div class="t" style="top:586.82px;font-size:19.2px;line-height:19.2px;color:#3e4a60;letter-spacing:0.262px;left:476.50px;-webkit-text-stroke:0.25px currentColor;">Aquent Sys...</div>
<svg style="left:605.3px;top:593.3px" width="16" height="10" viewBox="0 0 16 10"><path d="M1 1.2 L7.7 7.6 L14.4 1.2" stroke="#474747" stroke-width="2" fill="none"/></svg>
<div class="t" style="top:586.82px;font-size:19.2px;line-height:19.2px;color:#3e4a60;letter-spacing:-0.2px;left:625.90px;-webkit-text-stroke:0.25px currentColor;">26460914</div>
<svg style="left:755.1px;top:593.3px" width="16" height="10" viewBox="0 0 16 10"><path d="M1 1.2 L7.7 7.6 L14.4 1.2" stroke="#474747" stroke-width="2" fill="none"/></svg>
<div class="t" style="top:586.82px;font-size:19.2px;line-height:19.2px;color:#3e4a60;letter-spacing:0.1px;left:775.70px;-webkit-text-stroke:0.25px currentColor;">16-08-2016</div>
<div class="t" style="top:586.82px;font-size:19.2px;line-height:19.2px;color:#3e4a60;letter-spacing:-0.2px;left:906.20px;-webkit-text-stroke:0.25px currentColor;">587</div>
<svg style="left:156.3px;top:626.2px" width="16" height="10" viewBox="0 0 16 10"><path d="M1 1.2 L7.7 7.6 L14.4 1.2" stroke="#474747" stroke-width="2" fill="none"/></svg>
<div class="t" style="top:619.69px;font-size:19.2px;line-height:19.2px;color:#3e4a60;letter-spacing:0.866px;left:176.90px;-webkit-text-stroke:0.25px currentColor;">Tamil Nadu</div>
<svg style="left:306.1px;top:626.2px" width="16" height="10" viewBox="0 0 16 10"><path d="M1 1.2 L7.7 7.6 L14.4 1.2" stroke="#474747" stroke-width="2" fill="none"/></svg>
<div class="t" style="top:619.69px;font-size:19.2px;line-height:19.2px;color:#3e4a60;letter-spacing:0.539px;left:326.70px;-webkit-text-stroke:0.25px currentColor;">Chennai</div>
<svg style="left:455.9px;top:626.2px" width="16" height="10" viewBox="0 0 16 10"><path d="M1 1.2 L7.7 7.6 L14.4 1.2" stroke="#474747" stroke-width="2" fill="none"/></svg>
<div class="t" style="top:619.69px;font-size:19.2px;line-height:19.2px;color:#3e4a60;letter-spacing:0.824px;left:476.50px;-webkit-text-stroke:0.25px currentColor;">Microchips</div>
<svg style="left:605.3px;top:626.2px" width="16" height="10" viewBox="0 0 16 10"><path d="M1 1.2 L7.7 7.6 L14.4 1.2" stroke="#474747" stroke-width="2" fill="none"/></svg>
<div class="t" style="top:619.69px;font-size:19.2px;line-height:19.2px;color:#3e4a60;letter-spacing:-0.2px;left:625.90px;-webkit-text-stroke:0.25px currentColor;">26460909</div>
<svg style="left:755.1px;top:626.2px" width="16" height="10" viewBox="0 0 16 10"><path d="M1 1.2 L7.7 7.6 L14.4 1.2" stroke="#474747" stroke-width="2" fill="none"/></svg>
<div class="t" style="top:619.69px;font-size:19.2px;line-height:19.2px;color:#3e4a60;letter-spacing:0.1px;left:775.70px;-webkit-text-stroke:0.25px currentColor;">24-07-2016</div>
<div class="t" style="top:619.69px;font-size:19.2px;line-height:19.2px;color:#3e4a60;letter-spacing:-0.2px;left:906.20px;-webkit-text-stroke:0.25px currentColor;">580</div>
<svg style="left:156.3px;top:659.1px" width="16" height="10" viewBox="0 0 16 10"><path d="M1 1.2 L7.7 7.6 L14.4 1.2" stroke="#474747" stroke-width="2" fill="none"/></svg>
<div class="t" style="top:652.56px;font-size:19.2px;line-height:19.2px;color:#3e4a60;letter-spacing:0.59px;left:176.90px;-webkit-text-stroke:0.25px currentColor;">West Bengal</div>
<svg style="left:306.1px;top:659.1px" width="16" height="10" viewBox="0 0 16 10"><path d="M1 1.2 L7.7 7.6 L14.4 1.2" stroke="#474747" stroke-width="2" fill="none"/></svg>
<div class="t" style="top:652.56px;font-size:19.2px;line-height:19.2px;color:#3e4a60;letter-spacing:0.551px;left:326.70px;-webkit-text-stroke:0.25px currentColor;">Kolkata</div>
<svg style="left:455.9px;top:659.1px" width="16" height="10" viewBox="0 0 16 10"><path d="M1 1.2 L7.7 7.6 L14.4 1.2" stroke="#474747" stroke-width="2" fill="none"/></svg>
<div class="t" style="top:652.56px;font-size:19.2px;line-height:19.2px;color:#3e4a60;letter-spacing:0.295px;left:476.50px;-webkit-text-stroke:0.25px currentColor;">Earthshaker...</div>
<svg style="left:605.3px;top:659.1px" width="16" height="10" viewBox="0 0 16 10"><path d="M1 1.2 L7.7 7.6 L14.4 1.2" stroke="#474747" stroke-width="2" fill="none"/></svg>
<div class="t" style="top:652.56px;font-size:19.2px;line-height:19.2px;color:#3e4a60;letter-spacing:-0.2px;left:625.90px;-webkit-text-stroke:0.25px currentColor;">26460910</div>
<svg style="left:755.1px;top:659.1px" width="16" height="10" viewBox="0 0 16 10"><path d="M1 1.2 L7.7 7.6 L14.4 1.2" stroke="#474747" stroke-width="2" fill="none"/></svg>
<div class="t" style="top:652.56px;font-size:19.2px;line-height:19.2px;color:#3e4a60;letter-spacing:0.1px;left:775.70px;-webkit-text-stroke:0.25px currentColor;">28-08-2016</div>
<div class="t" style="top:652.56px;font-size:19.2px;line-height:19.2px;color:#3e4a60;letter-spacing:-0.2px;left:906.20px;-webkit-text-stroke:0.25px currentColor;">591</div>
<svg style="left:6.3px;top:691.9px" width="16" height="10" viewBox="0 0 16 10"><path d="M1 1.2 L7.7 7.6 L14.4 1.2" stroke="#474747" stroke-width="2" fill="none"/></svg>
<div class="t" style="top:685.43px;font-size:19.2px;line-height:19.2px;color:#3e4a60;letter-spacing:0.378px;left:26.90px;-webkit-text-stroke:0.25px currentColor;">Slovakia</div>
<svg style="left:156.3px;top:691.9px" width="16" height="10" viewBox="0 0 16 10"><path d="M1 1.2 L7.7 7.6 L14.4 1.2" stroke="#474747" stroke-width="2" fill="none"/></svg>
<svg style="left:306.1px;top:691.9px" width="16" height="10" viewBox="0 0 16 10"><path d="M1 1.2 L7.7 7.6 L14.4 1.2" stroke="#474747" stroke-width="2" fill="none"/></svg>
<div class="t" style="top:685.43px;font-size:19.2px;line-height:19.2px;color:#3e4a60;letter-spacing:0.48px;left:326.70px;-webkit-text-stroke:0.25px currentColor;">Bratislava</div>
<svg style="left:455.9px;top:691.9px" width="16" height="10" viewBox="0 0 16 10"><path d="M1 1.2 L7.7 7.6 L14.4 1.2" stroke="#474747" stroke-width="2" fill="none"/></svg>
<div class="t" style="top:685.43px;font-size:19.2px;line-height:19.2px;color:#3e4a60;letter-spacing:0.096px;left:476.50px;-webkit-text-stroke:0.25px currentColor;">Star Compa...</div>
<svg style="left:605.3px;top:691.9px" width="16" height="10" viewBox="0 0 16 10"><path d="M1 1.2 L7.7 7.6 L14.4 1.2" stroke="#474747" stroke-width="2" fill="none"/></svg>
<div class="t" style="top:685.43px;font-size:19.2px;line-height:19.2px;color:#3e4a60;letter-spacing:-0.384px;left:625.90px;-webkit-text-stroke:0.25px currentColor;">00421 2 582...</div>
<svg style="left:755.1px;top:691.9px" width="16" height="10" viewBox="0 0 16 10"><path d="M1 1.2 L7.7 7.6 L14.4 1.2" stroke="#474747" stroke-width="2" fill="none"/></svg>
<div class="t" style="top:685.43px;font-size:19.2px;line-height:19.2px;color:#3e4a60;letter-spacing:0.1px;left:775.70px;-webkit-text-stroke:0.25px currentColor;">18-04-2016</div>
<div class="t" style="top:685.43px;font-size:19.2px;line-height:19.2px;color:#3e4a60;letter-spacing:-0.2px;left:906.20px;-webkit-text-stroke:0.25px currentColor;">561</div>
<svg style="left:6.3px;top:724.8px" width="16" height="10" viewBox="0 0 16 10"><path d="M1 1.2 L7.7 7.6 L14.4 1.2" stroke="#474747" stroke-width="2" fill="none"/></svg>
<div class="t" style="top:718.30px;font-size:19.2px;line-height:19.2px;color:#3e4a60;letter-spacing:0.459px;left:26.90px;-webkit-text-stroke:0.25px currentColor;">United King...</div>
<svg style="left:156.3px;top:724.8px" width="16" height="10" viewBox="0 0 16 10"><path d="M1 1.2 L7.7 7.6 L14.4 1.2" stroke="#474747" stroke-width="2" fill="none"/></svg>
<svg style="left:306.1px;top:724.8px" width="16" height="10" viewBox="0 0 16 10"><path d="M1 1.2 L7.7 7.6 L14.4 1.2" stroke="#474747" stroke-width="2" fill="none"/></svg>
<div class="t" style="top:718.30px;font-size:19.2px;line-height:19.2px;color:#3e4a60;letter-spacing:0.878px;left:326.70px;-webkit-text-stroke:0.25px currentColor;">Manchester</div>
<svg style="left:455.9px;top:724.8px" width="16" height="10" viewBox="0 0 16 10"><path d="M1 1.2 L7.7 7.6 L14.4 1.2" stroke="#474747" stroke-width="2" fill="none"/></svg>
<div class="t" style="top:718.30px;font-size:19.2px;line-height:19.2px;color:#3e4a60;letter-spacing:0.472px;left:476.50px;-webkit-text-stroke:0.25px currentColor;">River Inc</div>
<svg style="left:605.3px;top:724.8px" width="16" height="10" viewBox="0 0 16 10"><path d="M1 1.2 L7.7 7.6 L14.4 1.2" stroke="#474747" stroke-width="2" fill="none"/></svg>
<svg style="left:755.1px;top:724.8px" width="16" height="10" viewBox="0 0 16 10"><path d="M1 1.2 L7.7 7.6 L14.4 1.2" stroke="#474747" stroke-width="2" fill="none"/></svg>
<div class="t" style="top:718.30px;font-size:19.2px;line-height:19.2px;color:#3e4a60;letter-spacing:0.1px;left:775.70px;-webkit-text-stroke:0.25px currentColor;">15-08-2016</div>
<div class="t" style="top:718.30px;font-size:19.2px;line-height:19.2px;color:#3e4a60;letter-spacing:-0.2px;left:906.20px;-webkit-text-stroke:0.25px currentColor;">594</div>
<div class="a" style="left:152px;top:349.63px;width:2px;height:394.43999999999994px;background:#c2c2c2;"></div>
<div class="a" style="left:302px;top:349.63px;width:2px;height:394.43999999999994px;background:#c2c2c2;"></div>
<div class="a" style="left:452px;top:349.63px;width:2px;height:394.43999999999994px;background:#c2c2c2;"></div>
<div class="a" style="left:601px;top:349.63px;width:2px;height:394.43999999999994px;background:#c2c2c2;"></div>
<div class="a" style="left:751px;top:349.63px;width:2px;height:394.43999999999994px;background:#c2c2c2;"></div>
<div class="a" style="left:901px;top:349.63px;width:2px;height:394.43999999999994px;background:#c2c2c2;"></div>
<div class="a" style="left:1051px;top:349.63px;width:2px;height:394.43999999999994px;background:#c2c2c2;"></div>
<div class="a" style="left:3px;top:677px;width:150px;height:2px;background:#c2c2c2;"></div>
<div class="a" style="left:3px;top:710px;width:150px;height:2px;background:#c2c2c2;"></div>
<div class="a" style="left:3px;top:743px;width:150px;height:2px;background:#c2c2c2;"></div>
<div class="a" style="left:153px;top:414px;width:299.6px;height:2px;background:#c2c2c2;"></div>
<div class="a" style="left:153px;top:546px;width:299.6px;height:2px;background:#c2c2c2;"></div>
<div class="a" style="left:153px;top:579px;width:299.6px;height:2px;background:#c2c2c2;"></div>
<div class="a" style="left:153px;top:611px;width:299.6px;height:2px;background:#c2c2c2;"></div>
<div class="a" style="left:153px;top:644px;width:299.6px;height:2px;background:#c2c2c2;"></div>
<div class="a" style="left:153px;top:677px;width:299.6px;height:2px;background:#c2c2c2;"></div>
<div class="a" style="left:153px;top:710px;width:299.6px;height:2px;background:#c2c2c2;"></div>
<div class="a" style="left:153px;top:743px;width:299.6px;height:2px;background:#c2c2c2;"></div>
<div class="a" style="left:452.6px;top:381px;width:599.8000000000001px;height:2px;background:#c2c2c2;"></div>
<div class="a" style="left:452.6px;top:414px;width:599.8000000000001px;height:2px;background:#c2c2c2;"></div>
<div class="a" style="left:452.6px;top:447px;width:599.8000000000001px;height:2px;background:#c2c2c2;"></div>
<div class="a" style="left:452.6px;top:480px;width:599.8000000000001px;height:2px;background:#c2c2c2;"></div>
<div class="a" style="left:452.6px;top:513px;width:599.8000000000001px;height:2px;background:#c2c2c2;"></div>
<div class="a" style="left:452.6px;top:546px;width:599.8000000000001px;height:2px;background:#c2c2c2;"></div>
<div class="a" style="left:452.6px;top:579px;width:599.8000000000001px;height:2px;background:#c2c2c2;"></div>
<div class="a" style="left:452.6px;top:611px;width:599.8000000000001px;height:2px;background:#c2c2c2;"></div>
<div class="a" style="left:452.6px;top:644px;width:599.8000000000001px;height:2px;background:#c2c2c2;"></div>
<div class="a" style="left:452.6px;top:677px;width:599.8000000000001px;height:2px;background:#c2c2c2;"></div>
<div class="a" style="left:452.6px;top:710px;width:599.8000000000001px;height:2px;background:#c2c2c2;"></div>
<div class="a" style="left:452.6px;top:743px;width:599.8000000000001px;height:2px;background:#c2c2c2;"></div>
<div class="a" style="left:3px;top:744.67px;width:1049.4px;height:31.970000000000006px;background:#ffdf84;"></div>
<div class="a" style="left:3px;top:776.54px;width:1049.4px;height:1.5px;background:#c2c0b8;"></div>
<div class="t" style="top:750.62px;font-size:19.7px;line-height:19.7px;color:#111;font-weight:700;letter-spacing:-0.217px;left:8.40px;">Grand Total</div>
<div class="a" style="left:1052.4px;top:349.73px;width:824.1999999999998px;height:427.90999999999997px;background:#ffecb4;"></div>
<div class="a" style="left:1155.4px;top:349.83px;width:2px;height:427.30999999999995px;background:#e9e3d3;"></div>
<div class="a" style="left:1272.2px;top:349.83px;width:2px;height:427.30999999999995px;background:#e9e3d3;"></div>
<div class="a" style="left:1421.6px;top:349.83px;width:2px;height:427.30999999999995px;background:#e9e3d3;"></div>
<div class="a" style="left:1601.8px;top:349.83px;width:2px;height:427.30999999999995px;background:#e9e3d3;"></div>
<div class="a" style="left:1717.0px;top:349.83px;width:2px;height:427.30999999999995px;background:#e9e3d3;"></div>
<div class="a" style="left:1876px;top:349.83px;width:1.6px;height:427.80999999999995px;background:#e6e5ea;"></div>
<div class="a" style="left:1052.4px;top:381.5px;width:824.1999999999998px;height:2px;background:#e9e3d3;"></div>
<div class="a" style="left:1052.4px;top:414.37px;width:824.1999999999998px;height:2px;background:#e9e3d3;"></div>
<div class="a" style="left:1052.4px;top:447.24px;width:824.1999999999998px;height:2px;background:#e9e3d3;"></div>
<div class="a" style="left:1052.4px;top:480.11px;width:824.1999999999998px;height:2px;background:#e9e3d3;"></div>
<div class="a" style="left:1052.4px;top:512.98px;width:824.1999999999998px;height:2px;background:#e9e3d3;"></div>
<div class="a" style="left:1052.4px;top:545.8499999999999px;width:824.1999999999998px;height:2px;background:#e9e3d3;"></div>
<div class="a" style="left:1052.4px;top:578.72px;width:824.1999999999998px;height:2px;background:#e9e3d3;"></div>
<div class="a" style="left:1052.4px;top:611.5899999999999px;width:824.1999999999998px;height:2px;background:#e9e3d3;"></div>
<div class="a" style="left:1052.4px;top:644.46px;width:824.1999999999998px;height:2px;background:#e9e3d3;"></div>
<div class="a" style="left:1052.4px;top:677.3299999999999px;width:824.1999999999998px;height:2px;background:#e9e3d3;"></div>
<div class="a" style="left:1052.4px;top:710.2px;width:824.1999999999998px;height:2px;background:#e9e3d3;"></div>
<div class="a" style="left:1052.4px;top:743.0699999999999px;width:824.1999999999998px;height:2px;background:#e9e3d3;"></div>
<div class="a" style="left:1052.4px;top:775.9399999999999px;width:824.1999999999998px;height:2px;background:#e9e3d3;"></div>
<div class="t" style="top:356.58px;font-size:19.7px;line-height:19.7px;color:#3a3a3a;font-weight:700;letter-spacing:-0.1px;right:894.70px;">10,71,767</div>
<div class="t" style="top:356.58px;font-size:19.7px;line-height:19.7px;color:#3a3a3a;font-weight:700;letter-spacing:-0.1px;right:777.90px;">0</div>
<div class="t" style="top:356.58px;font-size:19.7px;line-height:19.7px;color:#3a3a3a;font-weight:700;letter-spacing:-0.1px;right:628.50px;">3</div>
<div class="t" style="top:356.58px;font-size:19.7px;line-height:19.7px;color:#3a3a3a;font-weight:700;letter-spacing:-0.1px;right:448.30px;">1,11,178</div>
<div class="t" style="top:356.58px;font-size:19.7px;line-height:19.7px;color:#3a3a3a;font-weight:700;letter-spacing:-0.1px;right:333.10px;">27,67,444</div>
<div class="t" style="top:356.58px;font-size:19.7px;line-height:19.7px;color:#3a3a3a;font-weight:700;letter-spacing:-0.1px;right:174.10px;">0</div>
<div class="t" style="top:389.45px;font-size:19.7px;line-height:19.7px;color:#3a3a3a;font-weight:700;letter-spacing:-0.1px;right:894.70px;">0</div>
<div class="t" style="top:389.45px;font-size:19.7px;line-height:19.7px;color:#3a3a3a;font-weight:700;letter-spacing:-0.1px;right:777.90px;">0</div>
<div class="t" style="top:389.45px;font-size:19.7px;line-height:19.7px;color:#3a3a3a;font-weight:700;letter-spacing:-0.1px;right:628.50px;">1</div>
<div class="t" style="top:389.45px;font-size:19.7px;line-height:19.7px;color:#3a3a3a;font-weight:700;letter-spacing:-0.1px;right:448.30px;">3,22,904</div>
<div class="t" style="top:389.45px;font-size:19.7px;line-height:19.7px;color:#3a3a3a;font-weight:700;letter-spacing:-0.1px;right:333.10px;">66,86,007</div>
<div class="t" style="top:389.45px;font-size:19.7px;line-height:19.7px;color:#3a3a3a;font-weight:700;letter-spacing:-0.1px;right:174.10px;">0</div>
<div class="t" style="top:422.32px;font-size:19.7px;line-height:19.7px;color:#3a3a3a;font-weight:700;letter-spacing:-0.1px;right:894.70px;">9,711</div>
<div class="t" style="top:422.32px;font-size:19.7px;line-height:19.7px;color:#3a3a3a;font-weight:700;letter-spacing:-0.1px;right:777.90px;">0</div>
<div class="t" style="top:422.32px;font-size:19.7px;line-height:19.7px;color:#3a3a3a;font-weight:700;letter-spacing:-0.1px;right:628.50px;">4</div>
<div class="t" style="top:422.32px;font-size:19.7px;line-height:19.7px;color:#3a3a3a;font-weight:700;letter-spacing:-0.1px;right:448.30px;">2,26,471</div>
<div class="t" style="top:422.32px;font-size:19.7px;line-height:19.7px;color:#3a3a3a;font-weight:700;letter-spacing:-0.1px;right:333.10px;">30,06,853</div>
<div class="t" style="top:422.32px;font-size:19.7px;line-height:19.7px;color:#3a3a3a;font-weight:700;letter-spacing:-0.1px;right:174.10px;">49,34,203</div>
<div class="t" style="top:455.19px;font-size:19.7px;line-height:19.7px;color:#3a3a3a;font-weight:700;letter-spacing:-0.1px;right:894.70px;">19,51,961</div>
<div class="t" style="top:455.19px;font-size:19.7px;line-height:19.7px;color:#3a3a3a;font-weight:700;letter-spacing:-0.1px;right:777.90px;">3</div>
<div class="t" style="top:455.19px;font-size:19.7px;line-height:19.7px;color:#3a3a3a;font-weight:700;letter-spacing:-0.1px;right:628.50px;">7</div>
<div class="t" style="top:455.19px;font-size:19.7px;line-height:19.7px;color:#3a3a3a;font-weight:700;letter-spacing:-0.1px;right:448.30px;">36,76,098</div>
<div class="t" style="top:455.19px;font-size:19.7px;line-height:19.7px;color:#3a3a3a;font-weight:700;letter-spacing:-0.1px;right:333.10px;">64,50,331</div>
<div class="t" style="top:455.19px;font-size:19.7px;line-height:19.7px;color:#3a3a3a;font-weight:700;letter-spacing:-0.1px;right:174.10px;">68,88,579</div>
<div class="t" style="top:488.06px;font-size:19.7px;line-height:19.7px;color:#3a3a3a;font-weight:700;letter-spacing:-0.1px;right:894.70px;">28,00,050</div>
<div class="t" style="top:488.06px;font-size:19.7px;line-height:19.7px;color:#3a3a3a;font-weight:700;letter-spacing:-0.1px;right:777.90px;">0</div>
<div class="t" style="top:488.06px;font-size:19.7px;line-height:19.7px;color:#3a3a3a;font-weight:700;letter-spacing:-0.1px;right:628.50px;">2</div>
<div class="t" style="top:488.06px;font-size:19.7px;line-height:19.7px;color:#3a3a3a;font-weight:700;letter-spacing:-0.1px;right:448.30px;">8,29,510</div>
<div class="t" style="top:488.06px;font-size:19.7px;line-height:19.7px;color:#3a3a3a;font-weight:700;letter-spacing:-0.1px;right:333.10px;">89,36,603</div>
<div class="t" style="top:488.06px;font-size:19.7px;line-height:19.7px;color:#3a3a3a;font-weight:700;letter-spacing:-0.1px;right:174.10px;">73,10,303</div>
<div class="t" style="top:520.93px;font-size:19.7px;line-height:19.7px;color:#3a3a3a;font-weight:700;letter-spacing:-0.1px;right:894.70px;">54,058</div>
<div class="t" style="top:520.93px;font-size:19.7px;line-height:19.7px;color:#3a3a3a;font-weight:700;letter-spacing:-0.1px;right:777.90px;">2</div>
<div class="t" style="top:520.93px;font-size:19.7px;line-height:19.7px;color:#3a3a3a;font-weight:700;letter-spacing:-0.1px;right:628.50px;">2</div>
<div class="t" style="top:520.93px;font-size:19.7px;line-height:19.7px;color:#3a3a3a;font-weight:700;letter-spacing:-0.1px;right:448.30px;">2,87,409</div>
<div class="t" style="top:520.93px;font-size:19.7px;line-height:19.7px;color:#3a3a3a;font-weight:700;letter-spacing:-0.1px;right:333.10px;">65,75,351</div>
<div class="t" style="top:520.93px;font-size:19.7px;line-height:19.7px;color:#3a3a3a;font-weight:700;letter-spacing:-0.1px;right:174.10px;">64,11,388</div>
<div class="t" style="top:553.80px;font-size:19.7px;line-height:19.7px;color:#3a3a3a;font-weight:700;letter-spacing:-0.1px;right:894.70px;">4,543</div>
<div class="t" style="top:553.80px;font-size:19.7px;line-height:19.7px;color:#3a3a3a;font-weight:700;letter-spacing:-0.1px;right:777.90px;">0</div>
<div class="t" style="top:553.80px;font-size:19.7px;line-height:19.7px;color:#3a3a3a;font-weight:700;letter-spacing:-0.1px;right:628.50px;">3</div>
<div class="t" style="top:553.80px;font-size:19.7px;line-height:19.7px;color:#3a3a3a;font-weight:700;letter-spacing:-0.1px;right:448.30px;">87,260</div>
<div class="t" style="top:553.80px;font-size:19.7px;line-height:19.7px;color:#3a3a3a;font-weight:700;letter-spacing:-0.1px;right:333.10px;">68,21,210</div>
<div class="t" style="top:553.80px;font-size:19.7px;line-height:19.7px;color:#3a3a3a;font-weight:700;letter-spacing:-0.1px;right:174.10px;">63,02,137</div>
<div class="t" style="top:586.67px;font-size:19.7px;line-height:19.7px;color:#3a3a3a;font-weight:700;letter-spacing:-0.1px;right:894.70px;">3,136</div>
<div class="t" style="top:586.67px;font-size:19.7px;line-height:19.7px;color:#3a3a3a;font-weight:700;letter-spacing:-0.1px;right:777.90px;">0</div>
<div class="t" style="top:586.67px;font-size:19.7px;line-height:19.7px;color:#3a3a3a;font-weight:700;letter-spacing:-0.1px;right:628.50px;">2</div>
<div class="t" style="top:586.67px;font-size:19.7px;line-height:19.7px;color:#3a3a3a;font-weight:700;letter-spacing:-0.1px;right:448.30px;">4,240</div>
<div class="t" style="top:586.67px;font-size:19.7px;line-height:19.7px;color:#3a3a3a;font-weight:700;letter-spacing:-0.1px;right:333.10px;">30,10,412</div>
<div class="t" style="top:586.67px;font-size:19.7px;line-height:19.7px;color:#3a3a3a;font-weight:700;letter-spacing:-0.1px;right:174.10px;">49,05,645</div>
<div class="t" style="top:619.54px;font-size:19.7px;line-height:19.7px;color:#3a3a3a;font-weight:700;letter-spacing:-0.1px;right:894.70px;">95,199</div>
<div class="t" style="top:619.54px;font-size:19.7px;line-height:19.7px;color:#3a3a3a;font-weight:700;letter-spacing:-0.1px;right:777.90px;">0</div>
<div class="t" style="top:619.54px;font-size:19.7px;line-height:19.7px;color:#3a3a3a;font-weight:700;letter-spacing:-0.1px;right:628.50px;">3</div>
<div class="t" style="top:619.54px;font-size:19.7px;line-height:19.7px;color:#3a3a3a;font-weight:700;letter-spacing:-0.1px;right:448.30px;">1,14,302</div>
<div class="t" style="top:619.54px;font-size:19.7px;line-height:19.7px;color:#3a3a3a;font-weight:700;letter-spacing:-0.1px;right:333.10px;">13,42,232</div>
<div class="t" style="top:619.54px;font-size:19.7px;line-height:19.7px;color:#3a3a3a;font-weight:700;letter-spacing:-0.1px;right:174.10px;">58,76,151</div>
<div class="t" style="top:652.41px;font-size:19.7px;line-height:19.7px;color:#3a3a3a;font-weight:700;letter-spacing:-0.1px;right:894.70px;">2,06,105</div>
<div class="t" style="top:652.41px;font-size:19.7px;line-height:19.7px;color:#3a3a3a;font-weight:700;letter-spacing:-0.1px;right:777.90px;">0</div>
<div class="t" style="top:652.41px;font-size:19.7px;line-height:19.7px;color:#3a3a3a;font-weight:700;letter-spacing:-0.1px;right:628.50px;">8</div>
<div class="t" style="top:652.41px;font-size:19.7px;line-height:19.7px;color:#3a3a3a;font-weight:700;letter-spacing:-0.1px;right:448.30px;">6,35,530</div>
<div class="t" style="top:652.41px;font-size:19.7px;line-height:19.7px;color:#3a3a3a;font-weight:700;letter-spacing:-0.1px;right:333.10px;">45,38,482</div>
<div class="t" style="top:652.41px;font-size:19.7px;line-height:19.7px;color:#3a3a3a;font-weight:700;letter-spacing:-0.1px;right:174.10px;">46,90,246</div>
<div class="t" style="top:685.28px;font-size:19.7px;line-height:19.7px;color:#3a3a3a;font-weight:700;letter-spacing:-0.1px;right:894.70px;">0</div>
<div class="t" style="top:685.28px;font-size:19.7px;line-height:19.7px;color:#3a3a3a;font-weight:700;letter-spacing:-0.1px;right:777.90px;">0</div>
<div class="t" style="top:685.28px;font-size:19.7px;line-height:19.7px;color:#3a3a3a;font-weight:700;letter-spacing:-0.1px;right:628.50px;">6</div>
<div class="t" style="top:685.28px;font-size:19.7px;line-height:19.7px;color:#3a3a3a;font-weight:700;letter-spacing:-0.1px;right:448.30px;">5,19,440</div>
<div class="t" style="top:685.28px;font-size:19.7px;line-height:19.7px;color:#3a3a3a;font-weight:700;letter-spacing:-0.1px;right:333.10px;">16,72,774</div>
<div class="t" style="top:685.28px;font-size:19.7px;line-height:19.7px;color:#3a3a3a;font-weight:700;letter-spacing:-0.1px;right:174.10px;">0</div>
<div class="t" style="top:718.15px;font-size:19.7px;line-height:19.7px;color:#3a3a3a;font-weight:700;letter-spacing:-0.1px;right:894.70px;">10,22,140</div>
<div class="t" style="top:718.15px;font-size:19.7px;line-height:19.7px;color:#3a3a3a;font-weight:700;letter-spacing:-0.1px;right:777.90px;">0</div>
<div class="t" style="top:718.15px;font-size:19.7px;line-height:19.7px;color:#3a3a3a;font-weight:700;letter-spacing:-0.1px;right:628.50px;">6</div>
<div class="t" style="top:718.15px;font-size:19.7px;line-height:19.7px;color:#3a3a3a;font-weight:700;letter-spacing:-0.1px;right:448.30px;">8,04,139</div>
<div class="t" style="top:718.15px;font-size:19.7px;line-height:19.7px;color:#3a3a3a;font-weight:700;letter-spacing:-0.1px;right:333.10px;">51,88,545</div>
<div class="t" style="top:718.15px;font-size:19.7px;line-height:19.7px;color:#3a3a3a;font-weight:700;letter-spacing:-0.1px;right:174.10px;">0</div>
<div class="t" style="top:751.02px;font-size:19.7px;line-height:19.7px;color:#3a3a3a;font-weight:700;letter-spacing:-0.1px;right:894.70px;">72,18,672</div>
<div class="t" style="top:751.02px;font-size:19.7px;line-height:19.7px;color:#3a3a3a;font-weight:700;letter-spacing:-0.1px;right:777.90px;">5</div>
<div class="t" style="top:751.02px;font-size:19.7px;line-height:19.7px;color:#3a3a3a;font-weight:700;letter-spacing:-0.1px;right:628.50px;">47</div>
<div class="t" style="top:751.02px;font-size:19.7px;line-height:19.7px;color:#3a3a3a;font-weight:700;letter-spacing:-0.1px;right:448.30px;">76,18,482</div>
<div class="t" style="top:751.02px;font-size:19.7px;line-height:19.7px;color:#3a3a3a;font-weight:700;letter-spacing:-0.1px;right:333.10px;">5,69,96,245</div>
<div class="t" style="top:751.02px;font-size:19.7px;line-height:19.7px;color:#3a3a3a;font-weight:700;letter-spacing:-0.1px;right:174.10px;">4,73,18,652</div>
<div class="a" style="left:1052.8px;top:349.9px;width:103.4px;height:31.2px;border:1px dotted #333;"></div>
</div>
<div class="a" style="left:0px;top:34px;width:1px;height:850px;background:rgba(0,0,0,1.0);"></div>
<div class="a" style="left:2047px;top:34px;width:1px;height:850px;background:rgba(0,0,0,1.0);"></div>
<div class="a" style="left:1px;top:34px;width:1px;height:850px;background:rgba(0,0,0,0.72);"></div>
<div class="a" style="left:2046px;top:34px;width:1px;height:850px;background:rgba(0,0,0,0.72);"></div>
<div class="a" style="left:2px;top:34px;width:1px;height:850px;background:rgba(0,0,0,0.475);"></div>
<div class="a" style="left:2045px;top:34px;width:1px;height:850px;background:rgba(0,0,0,0.475);"></div>
<div class="a" style="left:3px;top:34px;width:1px;height:850px;background:rgba(0,0,0,0.265);"></div>
<div class="a" style="left:2044px;top:34px;width:1px;height:850px;background:rgba(0,0,0,0.33);"></div>
<div class="a" style="left:4px;top:34px;width:1px;height:850px;background:rgba(0,0,0,0.07);"></div>
<div class="a" style="left:2043px;top:34px;width:1px;height:850px;background:rgba(0,0,0,0.09);"></div>
<div class="a" style="left:0px;top:0px;width:1px;height:34px;background:#000;"></div>
<div class="a" style="left:1px;top:3px;width:1px;height:30px;background:rgba(0,0,0,0.1);"></div>
<div class="a" style="left:2047px;top:0px;width:1px;height:34px;background:#000;"></div>
<div class="a" style="left:2046px;top:3px;width:1px;height:30px;background:rgba(0,0,0,0.1);"></div>
<div class="a" style="left:0px;top:882px;width:2048px;height:1px;background:rgba(0,0,0,0.25);"></div>
<div class="a" style="left:0px;top:883px;width:2048px;height:1px;background:#000;"></div>
</body></html>
